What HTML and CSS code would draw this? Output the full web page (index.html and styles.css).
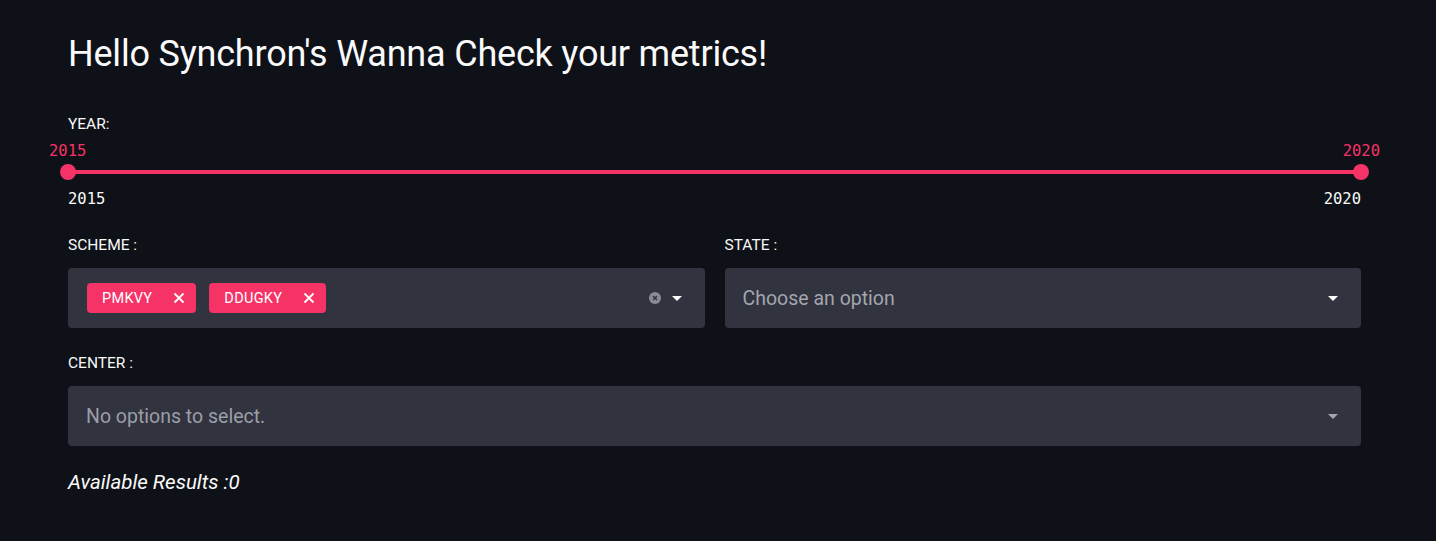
FILE: index.html
```html
<!DOCTYPE html>
<html>
<head>
<meta charset="utf-8">
<link rel="stylesheet" href="styles.css">
</head>
<body>
<main class="app">
  <h1 class="title">Hello Synchron's Wanna Check your metrics!</h1>

  <section class="field">
    <div class="label">YEAR:</div>
    <div class="slider">
      <div class="slider-values">
        <span class="val">2015</span>
        <span class="val">2020</span>
      </div>
      <div class="track">
        <span class="thumb"></span>
        <span class="bar"></span>
        <span class="thumb"></span>
      </div>
      <div class="slider-ticks">
        <span>2015</span>
        <span>2020</span>
      </div>
    </div>
  </section>

  <section class="cols">
    <div class="field">
      <div class="label">SCHEME :</div>
      <div class="select">
        <div class="select-body">
          <span class="tag">PMKVY <svg class="tag-x" viewBox="0 0 12 12" width="12" height="12"><path d="M1.5 1.5 L10.5 10.5 M10.5 1.5 L1.5 10.5" stroke="#fff" stroke-width="1.8" fill="none"/></svg></span>
          <span class="tag">DDUGKY <svg class="tag-x" viewBox="0 0 12 12" width="12" height="12"><path d="M1.5 1.5 L10.5 10.5 M10.5 1.5 L1.5 10.5" stroke="#fff" stroke-width="1.8" fill="none"/></svg></span>
        </div>
        <div class="select-icons">
          <svg class="clear" viewBox="0 0 12 12" width="12" height="12"><circle cx="6" cy="6" r="6" fill="#8a8c95"/><path d="M4 4 L8 8 M8 4 L4 8" stroke="#31333f" stroke-width="1.5"/></svg>
          <svg class="caret" viewBox="0 0 10 5" width="10" height="5"><path d="M0 0 H10 L5 5 Z" fill="#fff"/></svg>
        </div>
      </div>
    </div>
    <div class="field">
      <div class="label">STATE :</div>
      <div class="select">
        <div class="select-body"><span class="placeholder">Choose an option</span></div>
        <div class="select-icons">
          <svg class="caret" viewBox="0 0 10 5" width="10" height="5"><path d="M0 0 H10 L5 5 Z" fill="#fff"/></svg>
        </div>
      </div>
    </div>
  </section>

  <section class="field">
    <div class="label">CENTER :</div>
    <div class="select disabled">
      <div class="select-body"><span class="placeholder">No options to select.</span></div>
      <div class="select-icons">
        <svg class="caret" viewBox="0 0 10 5" width="10" height="5"><path d="M0 0 H10 L5 5 Z" fill="#a3a5ae"/></svg>
      </div>
    </div>
  </section>

  <p class="results">Available Results :0</p>
</main>
</body>
</html>
```

FILE: styles.css
```css
* { box-sizing: border-box; }
html, body { margin: 0; padding: 0; background: #0e1117; }
body {
  color: #fafafa;
  font-family: Roboto, "Noto Sans", sans-serif;
  width: 1436px;
  height: 541px;
  overflow: hidden;
}
.app {
  padding: 28px 75px 0 68px;
}
.title {
  margin: 0;
  font-weight: 400;
  font-size: 36px;
  line-height: 52px;
  letter-spacing: -0.2px;
  color: #fafafa;
}
.field { display: flex; flex-direction: column; }
.label {
  font-size: 15.5px;
  line-height: 18px;
  color: #fafafa;
}
.title + .field { margin-top: 35px; }
.slider { position: relative; }
.slider-values, .slider-ticks {
  display: flex;
  justify-content: space-between;
  font-family: "DejaVu Sans Mono", "Liberation Mono", monospace;
  font-size: 15.5px;
  line-height: 18px;
}
.slider-values {
  color: #f63366;
  margin: 9px -19px 0;
}
.track {
  display: flex;
  align-items: center;
  height: 16px;
  margin: 4px -8px 0;
}
.bar { flex: 1; height: 4px; background: #f63366; margin: 0 -2px; }
.thumb {
  width: 16px; height: 16px; border-radius: 50%;
  background: #f63366;
  position: relative; z-index: 1;
}
.slider-ticks { margin-top: 10px; color: #fafafa; }

.cols {
  display: grid;
  grid-template-columns: 1fr 1fr;
  column-gap: 20px;
  margin-top: 28px;
}
.cols + .field { margin-top: 26px; }
.field .select { margin-top: 14px; }
.select {
  height: 60px;
  background: #31333f;
  border-radius: 4px;
  display: flex;
  align-items: center;
  padding: 0 23px 0 19px;
}
.select-body { flex: 1; display: flex; align-items: center; gap: 13px; }
.select-icons { display: flex; align-items: center; gap: 11px; }
.clear { display: block; }
.caret { display: block; margin-top: 1px; }
.tag {
  display: inline-flex;
  align-items: center;
  height: 30px;
  background: #f63366;
  border-radius: 4px;
  color: #fff;
  font-size: 14.5px;
  letter-spacing: 0.3px;
  padding: 0 11px 0 15px;
  gap: 21px;
}
.tag-x { display: block; }
.placeholder {
  font-size: 19.5px;
  color: #a3a5ae;
  margin-left: -1px;
}
.select.disabled .placeholder { color: #9c9ea8; }
.results {
  margin: 22px 0 0;
  font-style: italic;
  font-size: 20.5px;
  line-height: 28px;
}
```
